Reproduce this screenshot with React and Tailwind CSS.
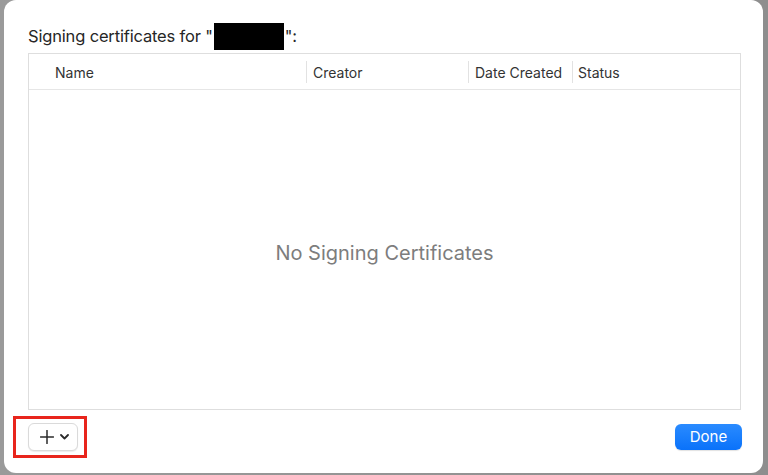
import React from 'react'

const columns = [
  { label: 'Name', width: 'w-[277px]', pad: 'pl-[26px]', divider: false },
  { label: 'Creator', width: 'w-[162px]', pad: 'pl-[7px]', divider: true },
  { label: 'Date Created', width: 'w-[104px]', pad: 'pl-[7px]', divider: true },
  { label: 'Status', width: 'flex-1', pad: 'pl-[6px]', divider: true },
]

function PlusIcon() {
  return (
    <svg width="14" height="14" viewBox="0 0 14 14" fill="none">
      <path d="M7 0.5v13M0.5 7h13" stroke="#2b2b2b" strokeWidth="1.5" strokeLinecap="round" />
    </svg>
  )
}

function ChevronDown() {
  return (
    <svg width="9" height="6" viewBox="0 0 9 6" fill="none">
      <path d="M1 1l3.5 3.5L8 1" stroke="#2b2b2b" strokeWidth="1.8" strokeLinecap="round" strokeLinejoin="round" />
    </svg>
  )
}

export default function App() {
  return (
    <div
      className="flex h-[475px] w-[768px] bg-[linear-gradient(90deg,#9a9a9a_0%,#8e8e8e_100%)] pb-[2px] pl-[4px] pr-[5px]"
      style={{ fontFamily: 'Inter, "Noto Sans", sans-serif' }}
    >
      <div className="flex flex-1 flex-col rounded-[12px] bg-white pl-[24px] pr-[22px]">
        <div className="mb-[7px] mt-[26px] flex h-[20px] items-center text-[16.5px] leading-none tracking-[-0.01em] text-[#262626]">
          <span className="pt-[1px]">Signing certificates for "</span>
          <span className="mx-[1px] mt-[1px] h-[27px] w-[70px] bg-black" />
          <span className="pt-[1px]">":</span>
        </div>

        <div className="flex h-[357px] flex-col border border-[#dedede]">
          <div className="flex h-[36px] shrink-0 border-b border-[#e6e6e6] text-[14px] text-[#333333]">
            {columns.map((col) => (
              <div key={col.label} className={`relative flex items-center pt-[2px] ${col.width} ${col.pad}`}>
                {col.divider && <span className="absolute left-0 top-[7px] h-[22px] w-px bg-[#e2e2e2]" />}
                {col.label}
              </div>
            ))}
          </div>
          <div className="flex flex-1 items-center justify-center pt-[6px] text-[20px] text-[#7d7d7d]">
            No Signing Certificates
          </div>
        </div>

        <div className="mt-[6px] flex items-start justify-between">
          <div className="ml-[-15px] border-[3px] border-[#e8251c] py-[4px] pl-[12px] pr-[6px]">
            <div className="flex h-[28px] w-[50px] items-center justify-center gap-[6px] rounded-[6px] border border-[#dadada] bg-white pl-[2px] shadow-[0_1px_1px_rgba(0,0,0,0.08)]">
              <PlusIcon />
              <ChevronDown />
            </div>
          </div>
          <button className="mr-[-1px] mt-[8px] flex h-[26px] w-[67px] items-center justify-center rounded-[6px] bg-[linear-gradient(180deg,#2a8bff_0%,#0a72fa_100%)] text-[15px] text-white shadow-[0_1px_1px_rgba(0,0,0,0.12)]">
            Done
          </button>
        </div>
      </div>
    </div>
  )
}
